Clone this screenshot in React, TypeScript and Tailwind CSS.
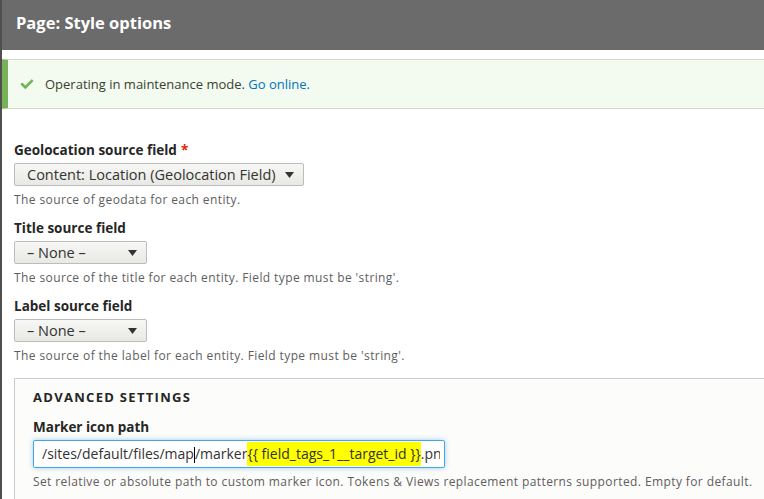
import React from "react";

function Arrow() {
  return (
    <svg width="9" height="6" viewBox="0 0 9 6" className="shrink-0">
      <polygon points="0,0 9,0 4.5,6" fill="#333333" />
    </svg>
  );
}

function Select({ value, width }: { value: string; width: string }) {
  return (
    <div
      className={`${width} h-[23px] flex items-center justify-between pl-[12px] pr-[9px] rounded-[2px] border border-[#bcbcbc] bg-gradient-to-b from-[#f7f7f5] to-[#e8e8e4] text-[14.5px] leading-[20px] text-[#333333]`}
    >
      <span className="whitespace-nowrap">{value}</span>
      <Arrow />
    </div>
  );
}

function Field({
  label,
  required,
  value,
  width,
  desc,
  className,
}: {
  label: string;
  required?: boolean;
  value: string;
  width: string;
  desc: string;
  className?: string;
}) {
  return (
    <div className={className}>
      <div className="text-[13.5px] leading-[18px] font-bold text-[#262626] mb-[4px] whitespace-nowrap">
        {label}
        {required && <span className="text-[#e62600] ml-[4px]">*</span>}
      </div>
      <Select value={value} width={width} />
      <div className="mt-[6px] text-[12px] leading-[16px] tracking-[0.4px] text-[#5e5e5e] whitespace-nowrap">
        {desc}
      </div>
    </div>
  );
}

export default function App() {
  return (
    <div className="w-full h-[499px] overflow-hidden bg-white border-l-2 border-[#4f4f4f] font-['Open_Sans','Noto_Sans',sans-serif]">
      <div className="h-[50px] bg-[#6b6b6b] flex items-center pl-[14px] pb-[4px]">
        <h1 className="text-white font-bold text-[16.5px] leading-[22px] whitespace-nowrap">
          Page: Style options
        </h1>
      </div>

      <div className="-ml-[2px] mt-[9px] h-[50px] bg-[#f3faef] border-y border-y-[#cfdccb] border-l-[8px] border-l-[#77b259] flex items-center pl-[12px]">
        <svg width="14" height="14" viewBox="0 0 16 16" className="shrink-0">
          <path
            fill="#73b355"
            d="M6.464,13.676c-0.194,0.194-0.513,0.194-0.707,0l-4.96-4.955c-0.194-0.193-0.194-0.513,0-0.707l1.405-1.407c0.194-0.195,0.512-0.195,0.707,0l2.849,2.848c0.194,0.193,0.513,0.193,0.707,0l6.629-6.626c0.195-0.194,0.514-0.194,0.707,0l1.404,1.404c0.193,0.196,0.193,0.514,0,0.707L6.464,13.676z"
          />
        </svg>
        <p className="ml-[11px] text-[13px] leading-[18px] text-[#37432f] whitespace-nowrap">
          Operating in maintenance mode.{" "}
          <a className="text-[#0074bd]">Go online.</a>
        </p>
      </div>

      <div className="pl-[12px] mt-[32px]">
        <Field
          label="Geolocation source field"
          required
          value="Content: Location (Geolocation Field)"
          width="w-[290px]"
          desc="The source of geodata for each entity."
        />
        <Field
          className="mt-[11px]"
          label="Title source field"
          value="– None –"
          width="w-[133px]"
          desc="The source of the title for each entity. Field type must be 'string'."
        />
        <Field
          className="mt-[11px]"
          label="Label source field"
          value="– None –"
          width="w-[133px]"
          desc="The source of the label for each entity. Field type must be 'string'."
        />

        <div className="mt-[14px] mr-[-40px] border border-[#cccccc] bg-[#fcfcfa] pl-[18px] pt-[9px] pb-[20px]">
          <div className="text-[13px] leading-[18px] font-bold uppercase tracking-[1.3px] text-[#262626] whitespace-nowrap">
            Advanced settings
          </div>
          <div className="mt-[12px] text-[13.5px] leading-[18px] font-bold text-[#262626] whitespace-nowrap">
            Marker icon path
          </div>
          <div className="mt-[4px] w-[412px] h-[28px] flex items-center rounded-[2px] border border-[#45a5e5] bg-white pl-[8px] pr-[4px] shadow-[0_0_5px_rgba(64,160,230,0.5)]">
            <div className="flex-1 overflow-hidden whitespace-nowrap text-[14px] leading-[24px] text-[#333333]">
              /sites/default/files/map
              <span className="inline-block w-px h-[16px] bg-black align-middle" />
              /marker
              <span className="inline-block bg-[#ffff00] leading-[24px]">
                {"{{ field_tags_1__target_id }}"}
              </span>
              .png
            </div>
          </div>
          <div className="mt-[6px] text-[12px] leading-[16px] tracking-[0.4px] text-[#5e5e5e] whitespace-nowrap">
            Set relative or absolute path to custom marker icon. Tokens &amp; Views replacement patterns supported. Empty for default.
          </div>
        </div>
      </div>
    </div>
  );
}
